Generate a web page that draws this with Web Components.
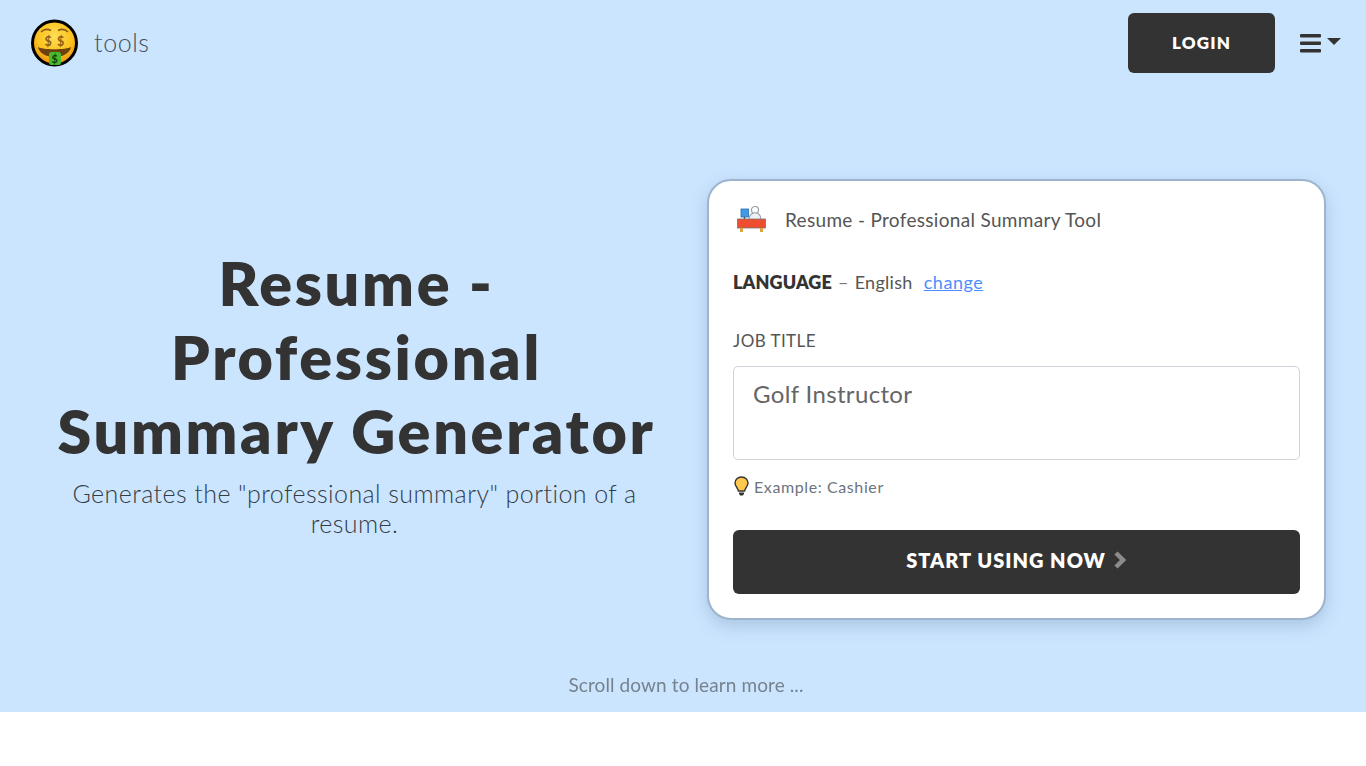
<!DOCTYPE html>
<html lang="en">
<head>
<meta charset="utf-8">
<title>Resume - Professional Summary Generator</title>
<style>
    html, body { margin: 0; padding: 0; background: #fff; }
    body { font-family: Lato, "Open Sans", sans-serif; color: #333; height: 766px; overflow: hidden; }
</style>
</head>
<body>
<tool-page>
    <top-nav slot="nav"></top-nav>
    <hero-copy slot="copy">
        <span slot="title">Resume -<br>Professional<br>Summary Generator</span>
        Generates the "professional summary" portion of a resume.
    </hero-copy>
    <tool-card slot="card"></tool-card>
</tool-page>

<script>
class ToolPage extends HTMLElement {
    constructor() {
        super();
        this.attachShadow({ mode: 'open' });
        this.shadowRoot.innerHTML = `
            <style>
                :host{
                    display: flex;
                    flex-direction: column;
                    height: 712px;
                    background: #cce5ff;
                }
                #main{
                    flex: 1;
                    display: grid;
                    grid-template-columns: 707px 619px;
                    align-items: start;
                    padding-top: 93px;
                }
                #hint{
                    height: 40px;
                    padding-left: 6px;
                    text-align: center;
                    font-size: 19px;
                    line-height: 26px;
                    letter-spacing: .1px;
                    color: #76838f;
                    filter: blur(.4px);
                }
            </style>
            <slot name="nav"></slot>
            <section id="main">
                <slot name="copy"></slot>
                <slot name="card"></slot>
            </section>
            <div id="hint">Scroll down to learn more ...</div>
        `;
    }
}

class TopNav extends HTMLElement {
    constructor() {
        super();
        this.attachShadow({ mode: 'open' });
        this.shadowRoot.innerHTML = `
            <style>
                :host{
                    display: flex;
                    align-items: center;
                    height: 86px;
                    padding: 0 25px 0 31px;
                }
                #brand{
                    display: flex;
                    align-items: center;
                    gap: 16px;
                    font-size: 25px;
                    font-weight: 300;
                    letter-spacing: .6px;
                    color: #44505c;
                    flex: 1;
                }
                #brand span{ padding-bottom: 3px; }
                #login{
                    width: 147px;
                    height: 60px;
                    padding: 0 0 2px;
                    border: 0;
                    border-radius: 6px;
                    background: #333;
                    color: #fff;
                    font: 800 17px Lato, sans-serif;
                    letter-spacing: 1.2px;
                    margin-right: 25px;
                }
                #menu{ display: block; }
            </style>
            <div id="brand">
                <svg width="47" height="48" viewBox="0 0 47 48">
                    <defs>
                        <radialGradient id="face" cx="50%" cy="35%" r="65%">
                            <stop offset="0" stop-color="#ffdf55"/>
                            <stop offset=".6" stop-color="#fcc21f"/>
                            <stop offset="1" stop-color="#ee8f10"/>
                        </radialGradient>
                    </defs>
                    <circle cx="23.5" cy="24" r="22" fill="url(#face)" stroke="#000" stroke-width="3"/>
                    <path d="M10 13c3-3 7-3 10-1.500M27 11.500c3-1.500 7-1.500 10 1.500" fill="none" stroke="#8a5a14" stroke-width="1.600"/>
                    <text x="17.500" y="27" font-size="12.500" font-family="Lato" font-weight="700" fill="#8f5c14" text-anchor="middle">$</text>
                    <text x="30" y="27" font-size="12.500" font-family="Lato" font-weight="700" fill="#8f5c14" text-anchor="middle">$</text>
                    <path d="M7 28c4 3 29 3 33 0-1 6-8 10-16.500 10S8 34 7 28z" fill="#6d4210"/>
                    <rect x="18" y="33" width="12" height="13" rx="2.500" fill="#47bb2e"/>
                    <text x="24" y="44" font-size="11" font-family="Lato" font-weight="700" fill="#0f3f0a" text-anchor="middle">$</text>
                </svg>
                <span>tools</span>
            </div>
            <button id="login">LOGIN</button>
            <svg id="menu" width="41" height="19" viewBox="0 0 41 19">
                <rect x="0" y="0" width="21" height="3.500" rx="1" fill="#333"/>
                <rect x="0" y="7.500" width="21" height="3.500" rx="1" fill="#333"/>
                <rect x="0" y="15" width="21" height="3.500" rx="1" fill="#333"/>
                <path d="M27 4h14l-7 7z" fill="#333"/>
            </svg>
        `;
    }
}

class HeroCopy extends HTMLElement {
    constructor() {
        super();
        this.attachShadow({ mode: 'open' });
        this.shadowRoot.innerHTML = `
            <style>
                :host{
                    display: block;
                    padding: 67px 44px 0 46px;
                    text-align: center;
                    font-size: 25px;
                    font-weight: 300;
                    letter-spacing: .43px;
                    line-height: 30px;
                    color: #333d47;
                }
                h1{
                    margin: 0 0 10px 4px;
                    font-size: 61px;
                    line-height: 74px;
                    font-weight: 800;
                    letter-spacing: 2.7px;
                    color: #333;
                }
                p{ margin: 0 auto; width: 600px; }
            </style>
            <h1><slot name="title"></slot></h1>
            <p><slot></slot></p>
        `;
    }
}

class ToolCard extends HTMLElement {
    constructor() {
        super();
        this.attachShadow({ mode: 'open' });
        this.shadowRoot.innerHTML = `
            <style>
                :host{
                    display: block;
                    box-sizing: border-box;
                    height: 441px;
                    padding: 0 24px;
                    background: #fff;
                    border: 2px solid #9db4cc;
                    border-radius: 24px;
                    box-shadow: 0 6px 18px rgba(50,80,120,0.22);
                    font-size: 18px;
                    color: #555;
                }
                #head{
                    display: flex;
                    align-items: center;
                    gap: 19px;
                    height: 76px;
                    padding-left: 4px;
                    font-size: 19px;
                    letter-spacing: .32px;
                }
                #lang{
                    display: flex;
                    align-items: center;
                    height: 26px;
                    margin-top: 12px;
                    letter-spacing: .3px;
                }
                b{ color: #333; font-weight: 800; letter-spacing: .1px; }
                .dash{ margin: 0 6px; color: #777; }
                a{ color: #4d8dff; margin-left: 11px; text-decoration: underline; letter-spacing: .55px; }
                label{
                    display: block;
                    margin-top: 33px;
                    line-height: 26px;
                    font-size: 17px;
                    letter-spacing: .45px;
                    color: #555;
                }
                #input{
                    box-sizing: border-box;
                    height: 94px;
                    margin-top: 12px;
                    padding: 11px 19px;
                    border: 1px solid #cfd3da;
                    border-radius: 5px;
                    font-size: 24px;
                    line-height: 32px;
                    letter-spacing: .35px;
                    color: #666;
                }
                #example{
                    display: flex;
                    align-items: center;
                    gap: 5px;
                    height: 26px;
                    margin-top: 13px;
                    font-size: 16px;
                    letter-spacing: .6px;
                    color: #6c7480;
                    padding-left: 1px;
                }
                #start{
                    display: flex;
                    align-items: center;
                    justify-content: center;
                    gap: 7px;
                    width: 100%;
                    height: 64px;
                    padding: 0 0 4px;
                    margin-top: 31px;
                    border: 0;
                    border-radius: 6px;
                    background: #333;
                    color: #fff;
                    font: 800 20px Lato, sans-serif;
                    letter-spacing: 1px;
                }
            </style>
            <div id="head">
                <svg width="29" height="26" viewBox="0 0 29 26">
                    <circle cx="18" cy="4" r="3.500" fill="#fff" stroke="#9a9fa6" stroke-width="1.200"/>
                    <path d="M12 13.500c0-9 12-9 12 0z" fill="#eef1f4" stroke="#9a9fa6" stroke-width="1.200"/>
                    <rect x="4" y="3" width="7.500" height="8" fill="#3f9be8" stroke="#2a6fb0" stroke-width=".8"/>
                    <path d="M7.500 11v2" stroke="#555" stroke-width="1.500"/>
                    <rect x=".5" y="13" width="28" height="9" fill="#ee4e2f" stroke="#777" stroke-width=".8"/>
                    <path d="M3 22h3v4H3zM23 22h3v4h-3z" fill="#d9a441"/>
                </svg>
                <span>Resume - Professional Summary Tool</span>
            </div>
            <div id="lang"><b>LANGUAGE</b><span class="dash">–</span>English<a href="#">change</a></div>
            <label>JOB TITLE</label>
            <div id="input">Golf Instructor</div>
            <div id="example">
                <svg width="15" height="20" viewBox="0 0 15 20">
                    <path d="M7.500 1C3.800 1 1 3.700 1 7c0 3 2.600 4.600 3.400 8h6.200c.8-3.400 3.400-5 3.400-8 0-3.300-2.800-6-6.500-6z" fill="#ffc94d" stroke="#333" stroke-width="1.400"/>
                    <path d="M5 16.500h5v1.600L8.800 19.400H6.200L5 18.100z" fill="#333"/>
                </svg>
                Example: Cashier
            </div>
            <button id="start">START USING NOW
                <svg width="14" height="18" viewBox="0 0 14 18"><path d="M3 2l7 7-7 7" fill="none" stroke="#8c8c8c" stroke-width="4.500"/></svg>
            </button>
        `;
    }
}

customElements.define('tool-page', ToolPage);
customElements.define('top-nav', TopNav);
customElements.define('hero-copy', HeroCopy);
customElements.define('tool-card', ToolCard);
</script>
</body>
</html>
